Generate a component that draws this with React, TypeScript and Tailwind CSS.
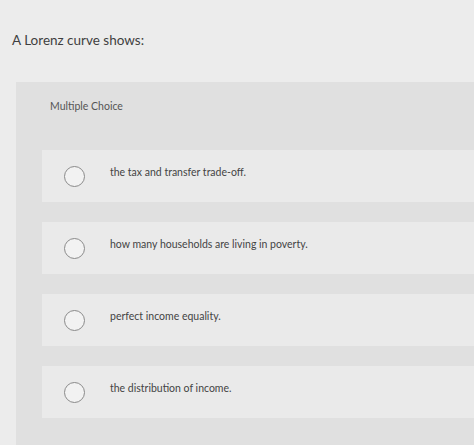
const options = [
  "the tax and transfer trade-off.",
  "how many households are living in poverty.",
  "perfect income equality.",
  "the distribution of income.",
];

export default function App() {
  return (
    <main
      className="w-[474px] h-[445px] overflow-hidden bg-[#ececec] text-[#4a4a4a]"
      style={{ fontFamily: "Lato, 'Open Sans', sans-serif" }}
    >
      <h1 className="pl-[12px] pt-[31px] text-[13.5px] leading-[18px] text-[#3f3f3f]">
        A Lorenz curve shows:
      </h1>

      <section className="ml-[16px] mt-[33px] h-[400px] bg-[#e0e0e0] pt-[17px]">
        <div className="pl-[34px] text-[10.5px] leading-[14px] text-[#555]">
          Multiple Choice
        </div>

        <ul className="mt-[37px] flex flex-col gap-[20px] pl-[26px]">
          {options.map((text) => (
            <li
              key={text}
              className="flex h-[52px] items-center bg-[#eaeaea]"
            >
              <span className="ml-[22px] h-[21px] w-[21px] shrink-0 rounded-full border-[1.5px] border-[#8a8a8a] bg-[#f2f2f2]" />
              <span className="ml-[25px] -mt-[7px] text-[10.5px] text-[#444]">
                {text}
              </span>
            </li>
          ))}
        </ul>
      </section>
    </main>
  );
}
